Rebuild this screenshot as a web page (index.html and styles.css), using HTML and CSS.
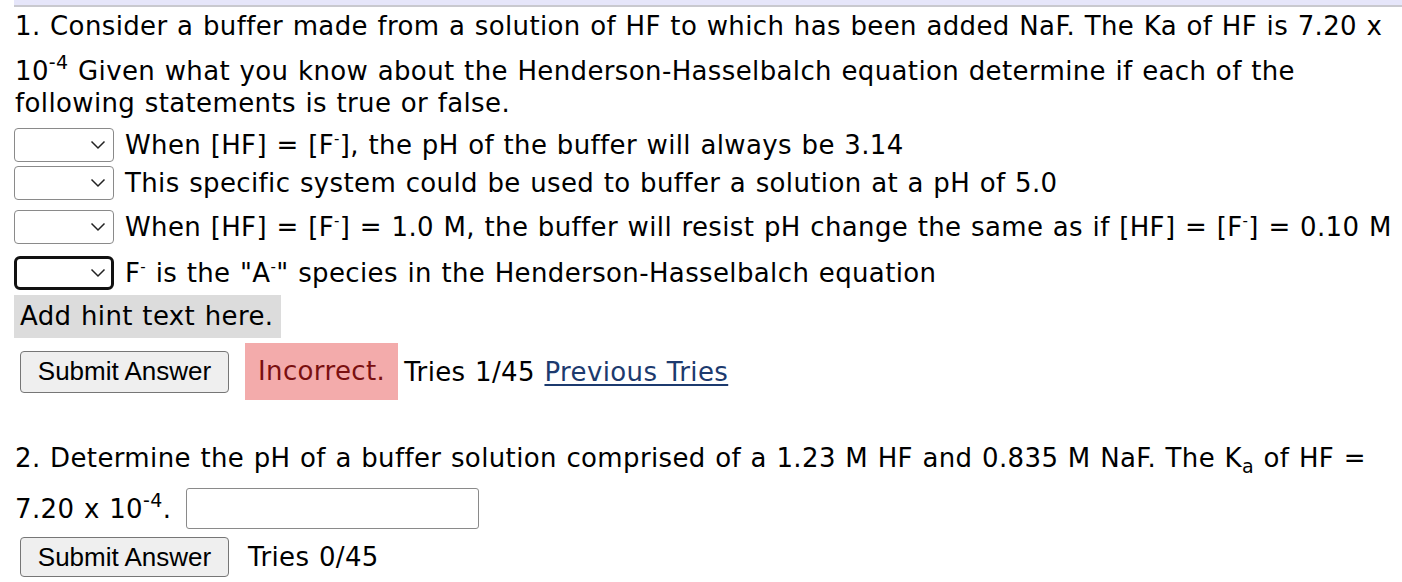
FILE: index.html
```html
<!DOCTYPE html>
<html>
<head>
<meta charset="utf-8">
<link rel="stylesheet" href="styles.css">
</head>
<body>
<div class="page">
  <div class="topbar"></div>

  <div class="q1">
    <div class="line l1">1. Consider a buffer made from a solution of HF to which has been added NaF. The Ka of HF is 7.20 x</div>
    <div class="line l2">10<sup class="exp">-4</sup> Given what you know about the Henderson-Hasselbalch equation determine if each of the</div>
    <div class="line l3">following statements is true or false.</div>
  </div>

  <div class="rows">
    <div class="row r1">
      <div class="sel"><svg class="chev" width="16" height="10" viewBox="0 0 16 10"><path d="M1.5 1.5 L8 8 L14.5 1.5" fill="none" stroke="#222" stroke-width="1.5"/></svg></div>
      <span class="stmt">When [HF] = [F<sup class="m">-</sup>], the pH of the buffer will always be 3.14</span>
    </div>
    <div class="row r2">
      <div class="sel"><svg class="chev" width="16" height="10" viewBox="0 0 16 10"><path d="M1.5 1.5 L8 8 L14.5 1.5" fill="none" stroke="#222" stroke-width="1.5"/></svg></div>
      <span class="stmt">This specific system could be used to buffer a solution at a pH of 5.0</span>
    </div>
    <div class="row r3">
      <div class="sel"><svg class="chev" width="16" height="10" viewBox="0 0 16 10"><path d="M1.5 1.5 L8 8 L14.5 1.5" fill="none" stroke="#222" stroke-width="1.5"/></svg></div>
      <span class="stmt">When [HF] = [F<sup class="m">-</sup>] = 1.0 M, the buffer will resist pH change the same as if [HF] = [F<sup class="m">-</sup>] = 0.10 M</span>
    </div>
    <div class="row r4">
      <div class="sel focus"><svg class="chev" width="16" height="10" viewBox="0 0 16 10"><path d="M1.5 1.5 L8 8 L14.5 1.5" fill="none" stroke="#222" stroke-width="1.5"/></svg></div>
      <span class="stmt">F<sup class="m">-</sup> is the "A<sup class="m">-</sup>" species in the Henderson-Hasselbalch equation</span>
    </div>
  </div>

  <div class="hint">Add hint text here.</div>

  <div class="submitrow">
    <button class="btn">Submit Answer</button>
    <span class="incorrect">Incorrect.</span>
    <span class="tries">Tries 1/45 <a href="#" class="prev">Previous Tries</a></span>
  </div>

  <div class="q2">
    <div class="line q2l1">2. Determine the pH of a buffer solution comprised of a 1.23 M HF and 0.835 M NaF. The K<sub class="sub">a</sub> of HF =</div>
    <div class="q2l2">
      <span class="line">7.20 x 10<sup class="exp">-4</sup>.</span>
      <span class="inp"></span>
    </div>
    <div class="submitrow2">
      <button class="btn btn2">Submit Answer</button>
      <span class="tries2">Tries 0/45</span>
    </div>
  </div>
</div>
</body>
</html>
```

FILE: styles.css
```css
html {
  overflow: hidden;
}
body {
  margin: 0;
  background: #ffffff;
  font-family: "DejaVu Sans", Verdana, sans-serif;
  font-size: 26px;
  letter-spacing: 0.37px;
  word-spacing: 0.9px;
  color: #000;
}
.page {
  padding-left: 14px;
}
.topbar {
  height: 5px;
  background: #e6e6fa;
  border-bottom: 2px solid #c9c9cf;
}
.line {
  line-height: 32px;
  white-space: nowrap;
}
.l1 {
  margin-top: 3px;
  padding-left: 1px;
}
.l2 {
  margin-top: 13px;
  padding-left: 1px;
}
.l3 {
  padding-left: 1px;
}
.exp {
  font-size: 19px;
  line-height: 0;
  vertical-align: 11px;
}
.m {
  font-size: 15px;
  line-height: 0;
  vertical-align: 10px;
}
.sub {
  font-size: 19px;
  line-height: 0;
  vertical-align: -6px;
}
.rows {
  margin-top: 9px;
}
.row {
  display: flex;
  align-items: center;
  gap: 11px;
  white-space: nowrap;
  line-height: 32px;
}
.r1 { margin-bottom: 4px; }
.r2 { margin-bottom: 10px; }
.r3 { margin-bottom: 12px; }
.r4 { margin-bottom: 5px; }
.sel {
  box-sizing: border-box;
  width: 100px;
  height: 34px;
  border: 1px solid #8a8a8a;
  border-radius: 4px;
  background: #fff;
  display: flex;
  align-items: center;
  justify-content: flex-end;
  padding-right: 7px;
  flex: none;
}
.sel.focus {
  border: 3px solid #111;
  border-radius: 6px;
  padding-right: 5px;
}
.chev {
  display: block;
}
.hint {
  display: inline-block;
  background: #dcdcdc;
  height: 43px;
  line-height: 43px;
  padding: 0 8px 0 6px;
}
.submitrow {
  display: flex;
  align-items: center;
  height: 57px;
  margin-top: 5px;
  white-space: nowrap;
}
.btn {
  box-sizing: border-box;
  font-family: "Liberation Sans", Arial, Helvetica, sans-serif;
  font-size: 26px;
  letter-spacing: 0;
  word-spacing: 0;
  color: #000;
  background: #efefef;
  border: 1px solid #767676;
  border-radius: 4px;
  width: 209px;
  height: 42px;
  padding: 0;
  margin-left: 6px;
}
.incorrect {
  display: inline-block;
  background: #f3abab;
  color: #7a1010;
  height: 57px;
  line-height: 57px;
  padding: 0 13px 0 13px;
  margin-left: 16px;
}
.tries {
  margin-left: 6px;
}
.prev {
  color: #1c3a6e;
  text-decoration: underline;
  text-underline-offset: 3px;
}
.q2 {
  margin-top: 42px;
}
.q2l1 {
  padding-left: 1px;
}
.q2l2 {
  display: flex;
  align-items: center;
  margin-top: 14px;
  padding-left: 1px;
  white-space: nowrap;
}
.inp {
  display: inline-block;
  box-sizing: border-box;
  width: 293px;
  height: 41px;
  border: 1px solid #8a8a8a;
  border-radius: 3px;
  margin-left: 15px;
  background: #fff;
}
.submitrow2 {
  display: flex;
  align-items: center;
  margin-top: 8px;
  white-space: nowrap;
}
.btn2 {
  height: 40px;
}
.tries2 {
  margin-left: 19px;
}
```
